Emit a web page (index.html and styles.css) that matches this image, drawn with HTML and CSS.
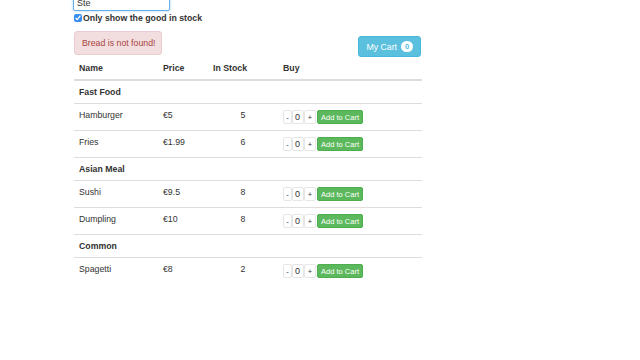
FILE: index.html
```html
<!DOCTYPE html>
<html>
<head>
<meta name="viewport" content="width=device-width, initial-scale=1">
<link rel="stylesheet" href="styles.css">
</head>
<body>

<div class="shop">

  <form class="search">
    <input type="text" class="search-box" value="Ste">
    <label class="stock-only"><input type="checkbox" checked>Only show the good in stock</label>
  </form>

  <div class="top-row">
    <div class="alert">Bread is not found!</div>
    <button class="cart-btn">My Cart <span class="badge">0</span></button>
  </div>

  <table class="goods">
    <colgroup>
      <col class="c-name">
      <col class="c-price">
      <col class="c-stock">
      <col class="c-buy">
    </colgroup>
    <thead>
      <tr><th>Name</th><th>Price</th><th>In Stock</th><th>Buy</th></tr>
    </thead>
    <tbody>
      <tr class="category"><td colspan="4">Fast Food</td></tr>
      <tr>
        <td>Hamburger</td><td>€5</td><td class="stock">5</td>
        <td><div class="buy"><button class="qty minus">-</button><input class="count" value="0"><button class="qty plus">+</button><button class="add">Add to Cart</button></div></td>
      </tr>
      <tr>
        <td>Fries</td><td>€1.99</td><td class="stock">6</td>
        <td><div class="buy"><button class="qty minus">-</button><input class="count" value="0"><button class="qty plus">+</button><button class="add">Add to Cart</button></div></td>
      </tr>
      <tr class="category"><td colspan="4">Asian Meal</td></tr>
      <tr>
        <td>Sushi</td><td>€9.5</td><td class="stock">8</td>
        <td><div class="buy"><button class="qty minus">-</button><input class="count" value="0"><button class="qty plus">+</button><button class="add">Add to Cart</button></div></td>
      </tr>
      <tr>
        <td>Dumpling</td><td>€10</td><td class="stock">8</td>
        <td><div class="buy"><button class="qty minus">-</button><input class="count" value="0"><button class="qty plus">+</button><button class="add">Add to Cart</button></div></td>
      </tr>
      <tr class="category"><td colspan="4">Common</td></tr>
      <tr>
        <td>Spagetti</td><td>€8</td><td class="stock">2</td>
        <td><div class="buy"><button class="qty minus">-</button><input class="count" value="0"><button class="qty plus">+</button><button class="add">Add to Cart</button></div></td>
      </tr>
    </tbody>
  </table>

</div>

</body>
</html>
```

FILE: styles.css
```css
* {
  box-sizing: border-box;
}

body {
  margin: 0;
  background-color: #fff;
  font-family: "Liberation Sans", Arial, sans-serif;
  font-size: 8.75px;
  color: #333;
}

.shop {
  width: 348px;
  margin-left: 73px;
}

.search {
  margin: 0;
}

.search-box {
  display: block;
  width: 97px;
  height: 17px;
  margin-top: -6px;
  padding: 0 3px;
  font-family: inherit;
  font-size: 9px;
  color: #333;
  border: 1px solid #66afe9;
  border-radius: 2px;
  box-shadow: 0 0 3px rgba(102, 175, 233, 0.6);
  outline: none;
}

.stock-only {
  display: flex;
  align-items: center;
  height: 11px;
  margin-top: 1px;
  margin-left: 1px;
  font-weight: bold;
  color: #333;
}

.stock-only input {
  width: 8px;
  height: 8px;
  margin: 0 1px 0 0;
  accent-color: #3b8ef0;
}

.top-row {
  display: flex;
  justify-content: space-between;
  align-items: flex-start;
  margin-top: 8px;
  padding-left: 1px;
}

.alert {
  padding: 5px 6px 5px 7px;
  line-height: 12px;
  color: #a94442;
  background-color: #f2dede;
  border: 1px solid #ebccd1;
  border-radius: 3px;
}

.cart-btn {
  display: flex;
  align-items: center;
  gap: 4px;
  height: 21px;
  margin-top: 5px;
  padding: 0 7px;
  font-family: inherit;
  font-size: 8.75px;
  color: #fff;
  background-color: #5bc0de;
  border: 1px solid #46b8da;
  border-radius: 3px;
}

.badge {
  display: inline-block;
  min-width: 12px;
  height: 11px;
  padding: 0 3px;
  font-size: 7.5px;
  font-weight: bold;
  line-height: 11px;
  text-align: center;
  color: #5bc0de;
  background-color: #fff;
  border-radius: 6px;
}

.goods {
  width: 348px;
  margin-left: 1px;
  border-collapse: collapse;
  table-layout: fixed;
}

.c-name { width: 84px; }
.c-price { width: 50px; }
.c-stock { width: 70px; }

.goods th,
.goods td {
  padding: 5px;
  line-height: 12px;
  text-align: left;
  vertical-align: top;
}

.goods th {
  border-bottom: 2px solid #ddd;
}

.goods td {
  border-top: 1px solid #ddd;
}

.goods .category td {
  font-weight: bold;
}

.goods td.stock {
  text-align: center;
}

.buy {
  display: flex;
  align-items: center;
  height: 16px;
}

.qty {
  height: 14px;
  padding: 0;
  font-family: inherit;
  font-size: 7.5px;
  color: #333;
  background-color: #fff;
  border: 1px solid #e6e6e6;
  border-radius: 2px;
}

.minus { width: 9px; }
.plus { width: 12px; }

.count {
  width: 12px;
  height: 14px;
  padding: 0 0 0 2px;
  font-family: inherit;
  font-size: 9px;
  color: #333;
  border: 1px solid #e6e6e6;
  border-radius: 2px;
}

.add {
  width: 46px;
  height: 14px;
  margin-left: 1px;
  padding: 0;
  font-family: inherit;
  font-size: 7.5px;
  color: #fff;
  background-color: #5cb85c;
  border: 1px solid #4cae4c;
  border-radius: 2px;
}
```
